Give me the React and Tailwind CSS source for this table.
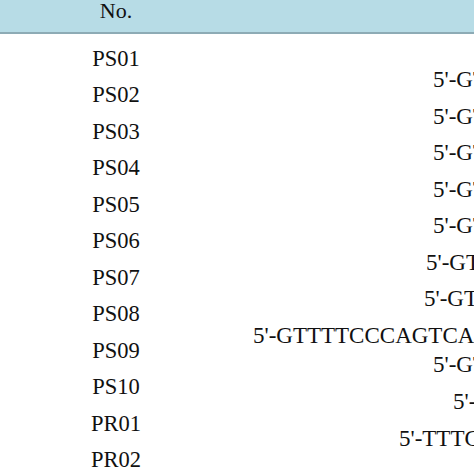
import React from "react";

const ids = ["PS01","PS02","PS03","PS04","PS05","PS06","PS07","PS08","PS09","PS10","PR01","PR02"];

// sequences are clipped by the right edge, only the start shows
const seqs = [
  { s: "5'-GTCAGGTACCTGATCGAC-3'", cls: "pl-[201px]" },
  { s: "5'-GTACCAGTTGCAAGCTTG-3'", cls: "pl-[201px]" },
  { s: "5'-GTTCAGCAAGTGACTCAG-3'", cls: "pl-[201px]" },
  { s: "5'-GTCGACTTGCAGGATCCA-3'", cls: "pl-[201px]" },
  { s: "5'-GTGACCTGAGTCAAGCTA-3'", cls: "pl-[201px]" },
  { s: "5'-GTTCAGGAAACAGCTATGAC-3'", cls: "pl-[194px]" },
  { s: "5'-GTTGTAAAACGACGGCCAGT-3'", cls: "pl-[192px]" },
  { s: "5'-GTTTTCCCAGTCACGAC-3'", cls: "pl-[21px]" },
  { s: "5'-GTCTAGAGGATCCCCGGG-3'", cls: "pl-[201px] -mt-[7px]" },
  { s: "5'-CAGGAAACAGCTATGAC-3'", cls: "pl-[221px]" },
  { s: "5'-TTTCGCCTTCAGTCAGTC-3'", cls: "pl-[167px] mt-[1px]" },
];

export default function App() {
  return (
    <div className="w-[474px] h-[474px] overflow-hidden bg-white text-[#111] text-[22px] font-['Liberation_Serif',serif]">
      <div className="h-[34px] bg-[#b7dce6] border-b-2 border-[#8dabb5] flex">
        <div className="w-[232px] text-center leading-[22px]">No.</div>
      </div>
      <div className="flex">
        <div className="w-[232px] shrink-0 pt-[7px] text-center text-[22.5px]">
          {ids.map((id) => (
            <div key={id} className="leading-[36.45px]">{id}</div>
          ))}
        </div>
        <div className="flex-1 min-w-0 pt-[28px] whitespace-nowrap text-[23px]">
          {seqs.map((r, i) => (
            <div key={i} className={"leading-[36.5px] " + r.cls}>{r.s}</div>
          ))}
        </div>
      </div>
    </div>
  );
}
